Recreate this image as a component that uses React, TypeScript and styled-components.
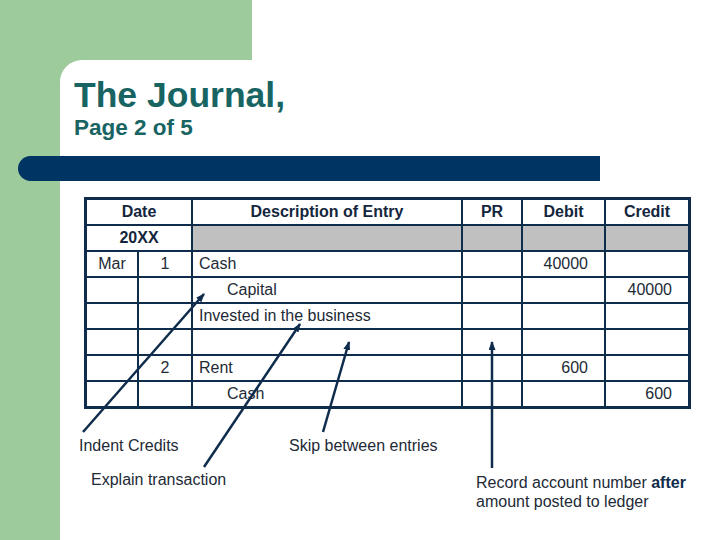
import * as React from 'react';
import styled, { createGlobalStyle } from 'styled-components';

const GlobalStyle = createGlobalStyle`
	html, body {
		margin: 0;
		padding: 0;
		background: #fff;
	}
	body {
		font-family: "Liberation Sans", Arial, sans-serif;
	}
`;

const INK = '#0f2c4c';

const Page = styled.div`
	position: relative;
	width: 720px;
	height: 540px;
	overflow: hidden;
	background: #9ecb9b;
	display: flex;
	flex-direction: column;
`;

const TopStrip = styled.div`
	height: 60px;
	display: flex;
	padding-left: 252px;
`;

const TopFill = styled.div`
	flex: 1;
	background: #fff;
`;

const Panel = styled.div`
	flex: 1;
	margin-left: 60px;
	background: #fff;
	border-top-left-radius: 22px;
	padding: 15px 0 0 14px;
	display: flex;
	flex-direction: column;
`;

const Title = styled.h1`
	margin: 0;
	font-size: 35.5px;
	line-height: 40px;
	font-weight: bold;
	color: #186462;
`;

const Subtitle = styled.h2`
	margin: 0;
	font-size: 22.5px;
	line-height: 26px;
	font-weight: bold;
	color: #186462;
`;

const Bar = styled.div`
	margin: 15px 0 0 -56px;
	width: 582px;
	height: 25px;
	background: #003462;
	border-radius: 13px 0 0 13px;
`;

const Journal = styled.div`
	margin: 16px 0 0 10px;
	width: 607px;
	box-sizing: border-box;
	display: grid;
	grid-template-columns: 50px 52px 268px 58px 81px 82px;
	grid-template-rows: repeat(8, 24px);
	gap: 2px;
	padding: 3px;
	background: ${INK};
`;

const Cell = styled.div<{ $span?: number; $align?: string; $indent?: boolean; $shade?: boolean; $head?: boolean }>`
	grid-column: span ${p => p.$span || 1};
	background: ${p => (p.$shade ? '#c0c0c0' : '#fff')};
	display: flex;
	align-items: center;
	justify-content: ${p => (p.$align === 'right' ? 'flex-end' : p.$align === 'left' ? 'flex-start' : 'center')};
	padding: ${p => (p.$align === 'right' ? '0 16px 0 0' : p.$align === 'left' ? (p.$indent ? '0 0 0 34px' : '0 0 0 6px') : '0')};
	font-size: 16px;
	font-weight: ${p => (p.$head ? 'bold' : 'normal')};
	color: ${p => (p.$head ? '#14263d' : '#222a36')};
	white-space: nowrap;
`;

const Notes = styled.div`
	margin: 28px 0 0 5px;
	display: grid;
	grid-template-columns: 210px 187px 1fr;
	font-size: 16px;
	line-height: 18px;
	color: #222a36;
`;

const NoteStack = styled.div`
	display: flex;
	flex-direction: column;
`;

const Note = styled.div<{ $shift?: number; $drop?: number }>`
	margin-left: ${p => p.$shift || 0}px;
	margin-top: ${p => p.$drop || 0}px;
`;

const Remark = styled(Note)`
	line-height: 19px;
`;

const Strong = styled.b`
	color: ${INK};
`;

const Arrows = styled.svg`
	position: absolute;
	left: 0;
	top: 0;
	pointer-events: none;
`;

type Row = Array<{ text?: string; span?: number; align?: string; indent?: boolean; shade?: boolean; head?: boolean }>;

const rows: Row[] = [
	[
		{ text: 'Date', span: 2, head: true },
		{ text: 'Description of Entry', head: true },
		{ text: 'PR', head: true },
		{ text: 'Debit', head: true },
		{ text: 'Credit', head: true }
	],
	[
		{ text: '20XX', span: 2, head: true },
		{ shade: true },
		{ shade: true },
		{ shade: true },
		{ shade: true }
	],
	[{ text: 'Mar' }, { text: '1' }, { text: 'Cash', align: 'left' }, {}, { text: '40000', align: 'right' }, {}],
	[{}, {}, { text: 'Capital', align: 'left', indent: true }, {}, {}, { text: '40000', align: 'right' }],
	[{}, {}, { text: 'Invested in the business', align: 'left' }, {}, {}, {}],
	[{}, {}, {}, {}, {}, {}],
	[{}, { text: '2' }, { text: 'Rent', align: 'left' }, {}, { text: '600', align: 'right' }, {}],
	[{}, {}, { text: 'Cash', align: 'left', indent: true }, {}, {}, { text: '600', align: 'right' }]
];

const pointers = [
	[83, 432, 204, 294],
	[204, 467, 300, 324],
	[323, 432, 349, 342],
	[492, 468, 492, 342]
];

export default function App() {
	return (
		<Page>
			<GlobalStyle />
			<TopStrip>
				<TopFill />
			</TopStrip>
			<Panel>
				<Title>The Journal,</Title>
				<Subtitle>Page 2 of 5</Subtitle>
				<Bar />
				<Journal>
					{rows.map((row, r) =>
						row.map((c, i) => (
							<Cell
								key={`${r}-${i}`}
								$span={c.span}
								$align={c.align}
								$indent={c.indent}
								$shade={c.shade}
								$head={c.head}
							>
								{c.text}
							</Cell>
						))
					)}
				</Journal>
				<Notes>
					<NoteStack>
						<Note>Indent Credits</Note>
						<Note $shift={12} $drop={16}>
							Explain transaction
						</Note>
					</NoteStack>
					<Note>Skip between entries</Note>
					<Remark $drop={36}>
						Record account number <Strong>after</Strong>
						<br />
						amount posted to ledger
					</Remark>
				</Notes>
			</Panel>
			<Arrows width={720} height={540} viewBox="0 0 720 540">
				<defs>
					<marker
						id="tip"
						markerUnits="userSpaceOnUse"
						markerWidth={9}
						markerHeight={7}
						refX={8}
						refY={3.5}
						orient="auto"
					>
						<path d="M0 0 L9 3.5 L0 7 Z" fill={INK} />
					</marker>
				</defs>
				{pointers.map(([x1, y1, x2, y2], i) => (
					<line
						key={i}
						x1={x1}
						y1={y1}
						x2={x2}
						y2={y2}
						stroke={INK}
						strokeWidth={2.5}
						markerEnd="url(#tip)"
					/>
				))}
			</Arrows>
		</Page>
	);
}
